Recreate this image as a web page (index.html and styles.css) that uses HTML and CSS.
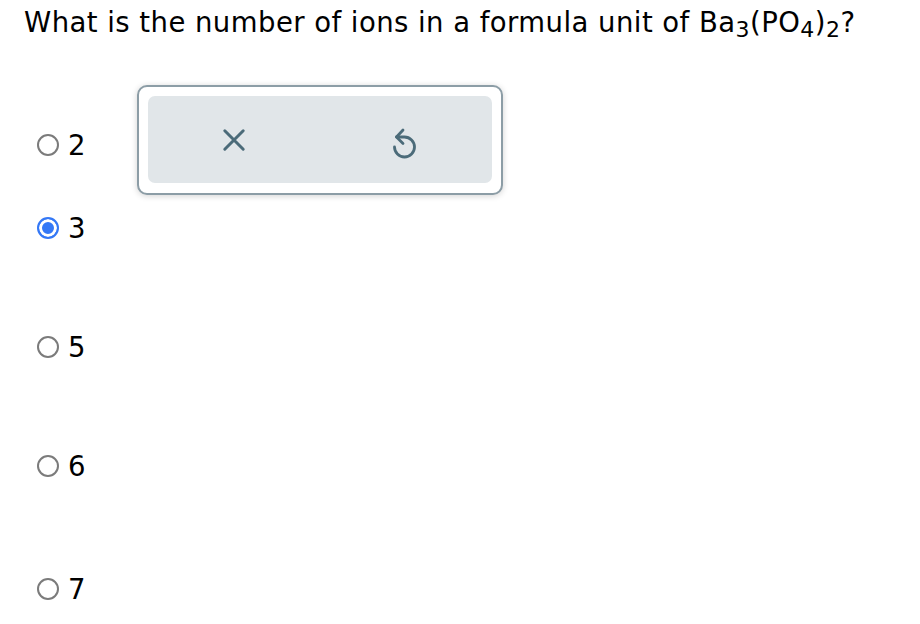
FILE: index.html
```html
<!DOCTYPE html>
<html lang="en">
<head>
<meta charset="utf-8">
<title>Question</title>
<link rel="stylesheet" href="styles.css">
</head>
<body>
<h1 class="question">What is the number of ions in a formula unit of Ba<sub>3</sub>(PO<sub>4</sub>)<sub>2</sub>?</h1>
<div class="main">
  <ul class="options">
    <li class="option"><span class="radio"></span><span class="label">2</span></li>
    <li class="option"><span class="radio checked"></span><span class="label">3</span></li>
    <li class="option"><span class="radio"></span><span class="label">5</span></li>
    <li class="option"><span class="radio"></span><span class="label">6</span></li>
    <li class="option"><span class="radio"></span><span class="label">7</span></li>
  </ul>
  <div class="toolbar">
    <div class="tools">
      <button class="tool" type="button" aria-label="Clear">
        <svg width="24" height="24" viewBox="0 0 24 24"><path d="M2.8 2.8 L21.2 21.2 M21.2 2.8 L2.8 21.2" fill="none" stroke="#4b6b79" stroke-width="3" stroke-linecap="round"/></svg>
      </button>
      <button class="tool" type="button" aria-label="Reset">
        <svg width="28" height="34" viewBox="0 0 28 34"><path d="M13 4 L6.5 11 L13 17.5" fill="none" stroke="#4b6b79" stroke-width="2.8" stroke-linecap="round" stroke-linejoin="round"/><path d="M6.5 11 H14.5 A10 10 0 1 1 4.5 21" fill="none" stroke="#4b6b79" stroke-width="2.8" stroke-linecap="round"/></svg>
      </button>
    </div>
  </div>
</div>
</body>
</html>
```
FILE: styles.css
```css
html, body {
  margin: 0;
  padding: 0;
  background: #ffffff;
}
body {
  font-family: "DejaVu Sans", Verdana, sans-serif;
  color: #000;
  width: 920px;
  height: 624px;
  overflow: hidden;
}
.question {
  margin: 0;
  padding: 5px 0 0 24px;
  font-size: 27.5px;
  letter-spacing: 0.45px;
  font-weight: normal;
  line-height: 34px;
  height: 41px;
}
.question sub {
  font-size: 22px;
  line-height: 0;
  vertical-align: -5px;
}
.main {
  display: flex;
  align-items: flex-start;
  padding-left: 37px;
  padding-top: 39px;
}
.options {
  list-style: none;
  margin: 0;
  padding: 45px 0 0 0;
  width: 100px;
}
.option {
  display: flex;
  align-items: center;
  height: 30px;
  gap: 9px;
  font-size: 27.5px;
}
.option:nth-child(2) { margin-top: 53px; }
.option:nth-child(3),
.option:nth-child(4) { margin-top: 89px; }
.option:nth-child(5) { margin-top: 93px; }
.radio {
  width: 22px;
  height: 22px;
  box-sizing: border-box;
  border-radius: 50%;
  border: 2px solid #7b7b7b;
  background: #fff;
  flex: none;
}
.radio.checked {
  border: 2px solid #3478f6;
  background: #3478f6;
  box-shadow: inset 0 0 0 3px #fff;
}
.label {
  line-height: 30px;
}
.toolbar {
  width: 366px;
  height: 110px;
  box-sizing: border-box;
  border: 2px solid #8c9da6;
  border-radius: 10px;
  padding: 9px 9px 10px 9px;
  background: #fff;
  box-shadow: 0 1px 6px rgba(0, 0, 0, 0.18);
}
.tools {
  display: flex;
  height: 87px;
  background: #e1e6e9;
  border-radius: 7px;
}
.tool {
  flex: 1;
  display: flex;
  align-items: center;
  justify-content: center;
  border: 0;
  background: transparent;
  padding: 0;
  margin: 0;
}
.tool:first-child svg { margin-left: 0; margin-top: 1px; }
.tool:last-child svg { margin-left: -4px; margin-top: 6px; }
```
